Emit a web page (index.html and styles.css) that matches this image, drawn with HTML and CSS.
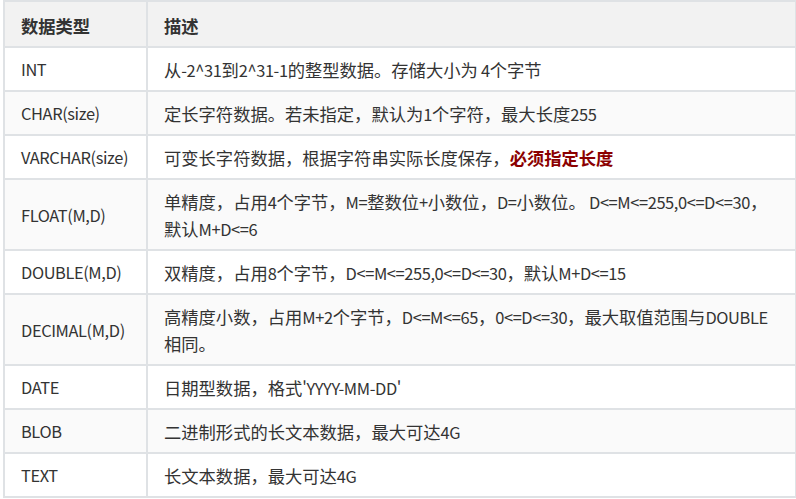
FILE: index.html
```html
<!DOCTYPE html>
<html lang="zh-CN">
<head>
<meta charset="utf-8">
<title>数据类型</title>
<link rel="stylesheet" href="styles.css">
</head>
<body>
<table class="types">
  <thead>
    <tr><th class="c-type">数据类型</th><th class="c-desc">描述</th></tr>
  </thead>
  <tbody>
    <tr><td class="lat">INT</td><td>从<span class="lat">-2^31</span>到<span class="lat">2^31-1</span>的整型数据。存储大小为<span class="lat"> 4</span>个字节</td></tr>
    <tr><td class="lat">CHAR(size)</td><td>定长字符数据。若未指定，默认为<span class="lat">1</span>个字符，最大长度<span class="lat">255</span></td></tr>
    <tr><td class="lat">VARCHAR(size)</td><td>可变长字符数据，根据字符串实际长度保存，<strong class="warn">必须指定长度</strong></td></tr>
    <tr><td class="lat">FLOAT(M,D)</td><td>单精度，占用<span class="lat">4</span>个字节，<span class="lat">M=</span>整数位<span class="lat">+</span>小数位，<span class="lat">D=</span>小数位。<span class="lat"> D&lt;=M&lt;=255,0&lt;=D&lt;=30</span>，默认<span class="lat">M+D&lt;=6</span></td></tr>
    <tr><td class="lat">DOUBLE(M,D)</td><td>双精度，占用<span class="lat">8</span>个字节，<span class="lat">D&lt;=M&lt;=255,0&lt;=D&lt;=30</span>，默认<span class="lat">M+D&lt;=15</span></td></tr>
    <tr><td class="lat">DECIMAL(M,D)</td><td>高精度小数，占用<span class="lat">M+2</span>个字节，<span class="lat">D&lt;=M&lt;=65</span>，<span class="lat">0&lt;=D&lt;=30</span>，最大取值范围与<span class="lat">DOUBLE</span>相同。</td></tr>
    <tr><td class="lat">DATE</td><td>日期型数据，格式<span class="lat">'YYYY-MM-DD'</span></td></tr>
    <tr><td class="lat">BLOB</td><td>二进制形式的长文本数据，最大可达<span class="lat">4G</span></td></tr>
    <tr><td class="lat">TEXT</td><td>长文本数据，最大可达<span class="lat">4G</span></td></tr>
  </tbody>
</table>
</body>
</html>
```

FILE: styles.css
```css
html, body {
  margin: 0;
  padding: 0;
  background: #ffffff;
}

body {
  font-family: "Noto Sans CJK SC", "Noto Sans", sans-serif;
  font-size: 17.3px;
  color: #333333;
}

.types {
  margin-left: 3px;
  width: 794px;
  table-layout: fixed;
  border-collapse: separate;
  border-spacing: 0;
  border-top: 2px solid #dfe2e5;
  border-left: 2px solid #dfe2e5;
}

.types th,
.types td {
  box-sizing: border-box;
  border-right: 2px solid #dfe2e5;
  border-bottom: 2px solid #dfe2e5;
  padding: 8px 16px 7px 16px;
  line-height: 27px;
  text-align: left;
  vertical-align: middle;
}

.types th {
  background: #f2f2f2;
  font-weight: 700;
  padding-top: 10px;
  padding-bottom: 7px;
}

.types .c-type {
  width: 143px;
}

.types tbody tr:nth-child(even) td {
  background: #fafafa;
}

.types td.lat {
  font-size: 16.4px;
  letter-spacing: -0.4px;
}

.types td span.lat {
  font-size: 0.95em;
  letter-spacing: -0.4px;
  line-height: 1;
}

.warn {
  color: #8b0000;
  font-weight: 700;
}
```
